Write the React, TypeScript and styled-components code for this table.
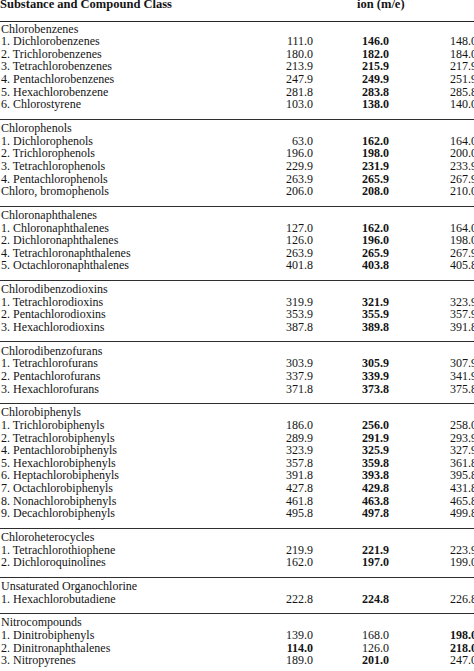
import { FC } from "react";
import styled, { createGlobalStyle } from "styled-components";

const GlobalStyle = createGlobalStyle`
  html, body {
    margin: 0;
    padding: 0;
    background: #fff;
    overflow: hidden;
  }
  body {
    font-family: "Liberation Serif", "Times New Roman", serif;
    color: #141414;
  }
`;

const Page = styled.div`
  width: 477px;
  font-size: 12px;
  line-height: 12.62px;
`;

const Row = styled.div`
  display: grid;
  grid-template-columns: 1fr 50px 76px 88px;
  height: 12.62px;
  white-space: nowrap;
`;

const HeadRow = styled(Row)`
  margin-top: -2px;
  padding-bottom: 10.5px;
  border-bottom: 1.5px solid #262626;
  font-weight: bold;
  font-size: 12.5px;
`;

const HeadCell = styled.div<{ $indent?: number }>`
  grid-column: ${({ $indent }) => ($indent ? "3 / 5" : "1 / 2")};
  padding-left: ${({ $indent }) => $indent || 0}px;
`;

const Group = styled.section<{ $first?: boolean; $last?: boolean }>`
  padding-top: ${({ $first }) => ($first ? 0.5 : 2.4)}px;
  padding-bottom: ${({ $last }) => ($last ? 0 : 7.8)}px;
  border-bottom: ${({ $last }) => ($last ? "none" : "1.5px solid #2e2e2e")};
`;

const Label = styled.div`
  padding-left: 1px;
`;

const Num = styled.div<{ $bold?: boolean }>`
  text-align: right;
  font-weight: ${({ $bold }) => ($bold ? "bold" : "normal")};
`;

type Item = {
  label: string;
  values: string[];
  bold?: number[];
};

type Block = {
  title: string;
  rows: Item[];
};

const data: Block[] = [
  {
    title: "Chlorobenzenes",
    rows: [
      { label: "1. Dichlorobenzenes", values: ["111.0", "146.0", "148.0"] },
      { label: "2. Trichlorobenzenes", values: ["180.0", "182.0", "184.0"] },
      { label: "3. Tetrachlorobenzenes", values: ["213.9", "215.9", "217.9"] },
      { label: "4. Pentachlorobenzenes", values: ["247.9", "249.9", "251.9"] },
      { label: "5. Hexachlorobenzene", values: ["281.8", "283.8", "285.8"] },
      { label: "6. Chlorostyrene", values: ["103.0", "138.0", "140.0"] },
    ],
  },
  {
    title: "Chlorophenols",
    rows: [
      { label: "1. Dichlorophenols", values: ["63.0", "162.0", "164.0"] },
      { label: "2. Trichlorophenols", values: ["196.0", "198.0", "200.0"] },
      { label: "3. Tetrachlorophenols", values: ["229.9", "231.9", "233.9"] },
      { label: "4. Pentachlorophenols", values: ["263.9", "265.9", "267.9"] },
      { label: "Chloro, bromophenols", values: ["206.0", "208.0", "210.0"] },
    ],
  },
  {
    title: "Chloronaphthalenes",
    rows: [
      { label: "1. Chloronaphthalenes", values: ["127.0", "162.0", "164.0"] },
      { label: "2. Dichloronaphthalenes", values: ["126.0", "196.0", "198.0"] },
      { label: "4. Tetrachloronaphthalenes", values: ["263.9", "265.9", "267.9"] },
      { label: "5. Octachloronaphthalenes", values: ["401.8", "403.8", "405.8"] },
    ],
  },
  {
    title: "Chlorodibenzodioxins",
    rows: [
      { label: "1. Tetrachlorodioxins", values: ["319.9", "321.9", "323.9"] },
      { label: "2. Pentachlorodioxins", values: ["353.9", "355.9", "357.9"] },
      { label: "3. Hexachlorodioxins", values: ["387.8", "389.8", "391.8"] },
    ],
  },
  {
    title: "Chlorodibenzofurans",
    rows: [
      { label: "1. Tetrachlorofurans", values: ["303.9", "305.9", "307.9"] },
      { label: "2. Pentachlorofurans", values: ["337.9", "339.9", "341.9"] },
      { label: "3. Hexachlorofurans", values: ["371.8", "373.8", "375.8"] },
    ],
  },
  {
    title: "Chlorobiphenyls",
    rows: [
      { label: "1. Trichlorobiphenyls", values: ["186.0", "256.0", "258.0"] },
      { label: "2. Tetrachlorobiphenyls", values: ["289.9", "291.9", "293.9"] },
      { label: "4. Pentachlorobiphenyls", values: ["323.9", "325.9", "327.9"] },
      { label: "5. Hexachlorobiphenyls", values: ["357.8", "359.8", "361.8"] },
      { label: "6. Heptachlorobiphenyls", values: ["391.8", "393.8", "395.8"] },
      { label: "7. Octachlorobiphenyls", values: ["427.8", "429.8", "431.8"] },
      { label: "8. Nonachlorobiphenyls", values: ["461.8", "463.8", "465.8"] },
      { label: "9. Decachlorobiphenyls", values: ["495.8", "497.8", "499.8"] },
    ],
  },
  {
    title: "Chloroheterocycles",
    rows: [
      { label: "1. Tetrachlorothiophene", values: ["219.9", "221.9", "223.9"] },
      { label: "2. Dichloroquinolines", values: ["162.0", "197.0", "199.0"] },
    ],
  },
  {
    title: "Unsaturated Organochlorine",
    rows: [
      { label: "1. Hexachlorobutadiene", values: ["222.8", "224.8", "226.8"] },
    ],
  },
  {
    title: "Nitrocompounds",
    rows: [
      { label: "1. Dinitrobiphenyls", values: ["139.0", "168.0", "198.0"], bold: [2] },
      { label: "2. Dinitronaphthalenes", values: ["114.0", "126.0", "218.0"], bold: [0, 2] },
      { label: "3. Nitropyrenes", values: ["189.0", "201.0", "247.0"], bold: [1] },
    ],
  },
];

const App: FC = () => {
  return (
    <>
      <GlobalStyle />
      <Page>
        <HeadRow>
          <HeadCell>Substance and Compound Class</HeadCell>
          <HeadCell $indent={44}>ion (m/e)</HeadCell>
        </HeadRow>

        {data.map((block, i) => (
          <Group key={block.title} $first={i === 0} $last={i === data.length - 1}>
            <Row>
              <Label>{block.title}</Label>
            </Row>
            {block.rows.map((item) => {
              const bold = item.bold || [1];
              return (
                <Row key={item.label}>
                  <Label>{item.label}</Label>
                  {item.values.map((v, j) => (
                    <Num key={j} $bold={bold.includes(j)}>
                      {v}
                    </Num>
                  ))}
                </Row>
              );
            })}
          </Group>
        ))}
      </Page>
    </>
  );
};

export default App;
